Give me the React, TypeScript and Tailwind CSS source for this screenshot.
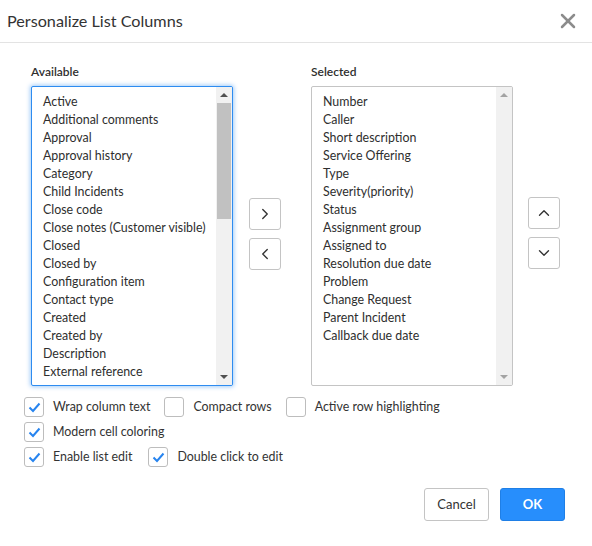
import { ChevronDown, ChevronLeft, ChevronRight, ChevronUp, X } from "lucide-react";

const available = [
  "Active",
  "Additional comments",
  "Approval",
  "Approval history",
  "Category",
  "Child Incidents",
  "Close code",
  "Close notes (Customer visible)",
  "Closed",
  "Closed by",
  "Configuration item",
  "Contact type",
  "Created",
  "Created by",
  "Description",
  "External reference",
];

const selected = [
  "Number",
  "Caller",
  "Short description",
  "Service Offering",
  "Type",
  "Severity(priority)",
  "Status",
  "Assignment group",
  "Assigned to",
  "Resolution due date",
  "Problem",
  "Change Request",
  "Parent Incident",
  "Callback due date",
];

function Scrollbar({ thumb }: { thumb: boolean }) {
  return (
    <div className="flex w-[16px] flex-col items-center bg-[#f1f1f1]">
      <div className="flex h-[16px] items-center justify-center">
        <div className={`h-0 w-0 border-x-[4px] border-b-[4px] border-x-transparent ${thumb ? "border-b-[#505050]" : "border-b-[#a3a3a3]"}`} />
      </div>
      {thumb ? <div className="h-[116px] w-[14px] bg-[#c1c1c1]" /> : null}
      <div className="flex-1" />
      <div className="flex h-[16px] items-center justify-center">
        <div className={`h-0 w-0 border-x-[4px] border-t-[4px] border-x-transparent ${thumb ? "border-t-[#505050]" : "border-t-[#a3a3a3]"}`} />
      </div>
    </div>
  );
}

function ListBox({ items, focused }: { items: string[]; focused?: boolean }) {
  return (
    <div
      className={`flex h-[300px] w-[202px] overflow-hidden rounded-[2px] border bg-white ${
        focused ? "border-[#2e8cf0] shadow-[0_0_4px_1px_rgba(46,140,240,0.45)]" : "border-[#c4c4c4]"
      }`}
    >
      <ul className="flex-1 pl-[11px] pt-[6px] text-[12.4px] leading-[18px] text-[#2e2e2e]">
        {items.map((item) => (
          <li key={item} className="whitespace-nowrap">
            {item}
          </li>
        ))}
      </ul>
      <Scrollbar thumb={!!focused} />
    </div>
  );
}

function IconButton({ children }: { children: React.ReactNode }) {
  return (
    <button className="flex h-[32px] w-[32px] items-center justify-center rounded-[3px] border border-[#c4c4c4] bg-white text-[#333]">
      {children}
    </button>
  );
}

function Check({ label, checked }: { label: string; checked?: boolean }) {
  return (
    <label className="flex items-center gap-[9px]">
      <span className="flex h-[20px] w-[20px] items-center justify-center rounded-[3px] border border-[#bdbdbd] bg-white">
        {checked ? (
          <svg width="13" height="11" viewBox="0 0 13 11" fill="none">
            <path d="M1.5 5.5 L5 9 L11.5 1.5" stroke="#2784ef" strokeWidth="2" />
          </svg>
        ) : null}
      </span>
      <span className="text-[12.4px] text-[#333]">{label}</span>
    </label>
  );
}

export default function App() {
  return (
    <div className="h-[546px] w-[592px] bg-white font-['Lato',sans-serif]">
      {/* Header */}
      <div className="flex h-[43px] items-center justify-between border-b border-[#e3e3e3] pl-[7px] pr-[12px]">
        <h1 className="text-[16.2px] text-[#333]">Personalize List Columns</h1>
        <X className="h-[24px] w-[24px] text-[#8c8c8c]" strokeWidth={2.5} />
      </div>

      <div className="pl-[24px] pr-[25px] pt-[20px]">
        <div className="flex pl-[7px]">
          <div>
            <div className="mb-[6px] text-[12px] font-semibold leading-[17px] text-[#2e2e2e]">Available</div>
            <ListBox items={available} focused />
          </div>
          <div className="flex flex-col gap-[8px] pl-[16px] pr-[30px] pt-[135px]">
            <IconButton>
              <ChevronRight className="h-[18px] w-[18px]" strokeWidth={1.8} />
            </IconButton>
            <IconButton>
              <ChevronLeft className="h-[18px] w-[18px]" strokeWidth={1.8} />
            </IconButton>
          </div>
          <div>
            <div className="mb-[6px] text-[12px] font-semibold leading-[17px] text-[#2e2e2e]">Selected</div>
            <ListBox items={selected} />
          </div>
          <div className="flex flex-col gap-[8px] pl-[15px] pt-[134px]">
            <IconButton>
              <ChevronUp className="h-[18px] w-[18px]" strokeWidth={1.8} />
            </IconButton>
            <IconButton>
              <ChevronDown className="h-[18px] w-[18px]" strokeWidth={1.8} />
            </IconButton>
          </div>
        </div>

        {/* Options */}
        <div className="mt-[11px] flex flex-col gap-[5px]">
          <div className="flex gap-[14px]">
            <Check label="Wrap column text" checked />
            <Check label="Compact rows" />
            <Check label="Active row highlighting" />
          </div>
          <Check label="Modern cell coloring" checked />
          <div className="flex gap-[16px]">
            <Check label="Enable list edit" checked />
            <Check label="Double click to edit" checked />
          </div>
        </div>

        <div className="mt-[21px] flex justify-end gap-[11px] pr-[2px]">
          <button className="h-[33px] w-[65px] rounded-[3px] border border-[#c4c4c4] bg-white text-[13px] text-[#333]">
            Cancel
          </button>
          <button className="h-[33px] w-[65px] rounded-[3px] border border-[#1f7fe6] bg-[#278efc] text-[13px] font-bold text-white">
            OK
          </button>
        </div>
      </div>
    </div>
  );
}
